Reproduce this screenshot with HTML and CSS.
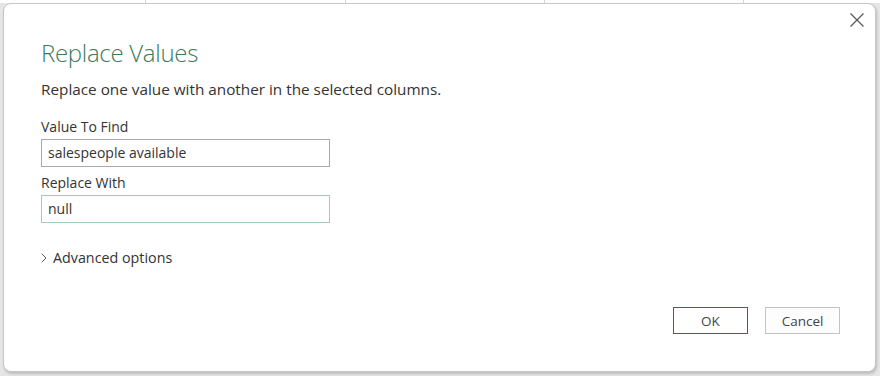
FILE: index.html
```html
<!DOCTYPE html>
<html>
<head>
<meta charset="utf-8">
<link rel="stylesheet" href="styles.css">
</head>
<body>
<div class="backdrop">
  <div class="grid-top">
    <span class="vline l1"></span><span class="vline l2"></span><span class="vline l3"></span><span class="vline l4"></span>
  </div>
  <div class="dialog">
    <button class="close" aria-label="Close">
      <svg width="14" height="14" viewBox="0 0 14 14"><path d="M0.5 0.5 L13.5 13.5 M13.5 0.5 L0.5 13.5" stroke="#555" stroke-width="1.2" fill="none"/></svg>
    </button>
    <h1 class="title">Replace Values</h1>
    <p class="desc">Replace one value with another in the selected columns.</p>
    <div class="field">
      <label class="label">Value To Find</label>
      <div class="input">salespeople available</div>
    </div>
    <div class="field">
      <label class="label">Replace With</label>
      <div class="input focused">null</div>
    </div>
    <div class="advanced">
      <svg class="chev" width="6" height="10" viewBox="0 0 6 10"><path d="M0.8 0.8 L5 5 L0.8 9.2" stroke="#555" stroke-width="1" fill="none"/></svg>
      <span>Advanced options</span>
    </div>
    <div class="actions">
      <button class="btn primary">OK</button>
      <button class="btn">Cancel</button>
    </div>
  </div>
</div>
</body>
</html>
```
FILE: styles.css
```css
* { box-sizing: border-box; }
html, body { margin: 0; padding: 0; }
body {
  width: 880px;
  height: 376px;
  background: #ececec;
  font-family: "Open Sans", "Segoe UI", sans-serif;
  overflow: hidden;
}
.backdrop {
  position: relative;
  width: 880px;
  height: 376px;
  padding: 3px 4px 4px 3px;
  background: linear-gradient(#ffffff 0 3px, #e6e6e6 3px);
}
.grid-top { position: absolute; top: 0; left: 0; right: 0; height: 3px; }
.vline { position: absolute; top: 0; width: 1px; height: 3px; background: #d4d4d4; }
.l1 { left: 145px; } .l2 { left: 345px; } .l3 { left: 544px; } .l4 { left: 743px; }
.dialog {
  position: relative;
  width: 873px;
  height: 369px;
  background: #ffffff;
  border: 1px solid #c6c6c6;
  border-radius: 8px;
  box-shadow: 1px 2px 3px rgba(0,0,0,0.18);
  padding: 33px 35px 0 37px;
  display: flex;
  flex-direction: column;
}
.close {
  position: absolute;
  top: 9px;
  right: 11px;
  background: none;
  border: 0;
  padding: 0;
  width: 14px;
  height: 14px;
  display: flex;
}
.title {
  margin: 0;
  font-weight: 300;
  font-size: 24px;
  line-height: 32px;
  color: #3b7a5d;
  letter-spacing: -0.3px;
}
.desc {
  margin: 10px 0 0;
  font-size: 15.3px;
  line-height: 20px;
  color: #333;
}
.field { display: flex; flex-direction: column; margin-top: 9px; }
.field + .field { margin-top: 6px; }
.label { font-size: 14px; line-height: 20px; color: #333; margin-top: 9px; }
.field + .field .label { margin-top: 0; }
.input {
  width: 289px;
  height: 28px;
  margin-top: 2px;
  border: 1px solid #a9a9a9;
  padding: 0 6px;
  font-size: 14px;
  line-height: 26px;
  color: #333;
}
.input.focused { border-color: #9fcdb6; }
.advanced {
  margin-top: 25px;
  display: flex;
  align-items: center;
  gap: 6px;
  font-size: 14.3px;
  line-height: 20px;
  color: #333;
}
.actions {
  margin-top: auto;
  margin-bottom: 37px;
  display: flex;
  justify-content: flex-end;
  gap: 17px;
}
.btn {
  width: 75px;
  height: 27px;
  background: #fdfdfd;
  border: 1px solid #c3c3c3;
  font-family: inherit;
  font-size: 13.5px;
  color: #444;
  padding: 0;
}
.btn.primary { border-color: #2d7152; background: #ffffff; }
```
